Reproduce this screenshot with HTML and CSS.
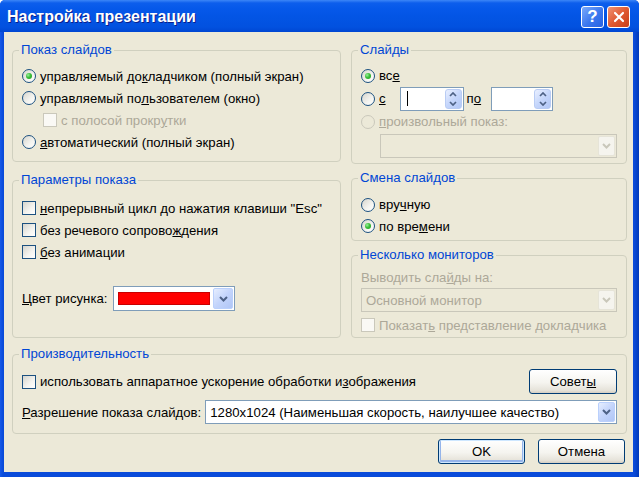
FILE: index.html
```html
<!DOCTYPE html>
<html lang="ru">
<head>
    <meta charset="UTF-8">
    <title>Настройка презентации</title>
    <link rel="stylesheet" href="styles.css">
</head>
<body>
    <div class="window">
        <div class="titlebar">
            <span class="title">Настройка презентации</span>
            <div class="caption-buttons">
                <span class="cap-btn help">?</span>
                <span class="cap-btn close">
                    <svg width="12" height="12" viewBox="0 0 12 12"><path d="M2 2l8 8M10 2l-8 8" stroke="#fff" stroke-width="2.2" stroke-linecap="round"/></svg>
                </span>
            </div>
        </div>

        <div class="client">
            <div class="columns">
                <div class="col col-left">
                    <!-- Показ слайдов -->
                    <fieldset class="group show-type">
                        <legend>Показ слайдов</legend>
                        <div class="row"><span class="radio checked"></span>управляемый до<u>к</u>ладчиком (полный экран)</div>
                        <div class="row"><span class="radio"></span>управляемый по<u>л</u>ьзователем (окно)</div>
                        <div class="row indent disabled"><span class="check"></span>с полосой прокр<u>у</u>тки</div>
                        <div class="row"><span class="radio"></span><u>а</u>втоматический (полный экран)</div>
                    </fieldset>

                    <!-- Параметры показа -->
                    <fieldset class="group show-options">
                        <legend>Параметры показа</legend>
                        <div class="row"><span class="check"></span><u>н</u>епрерывный цикл до нажатия клавиши "Esc"</div>
                        <div class="row"><span class="check"></span>без речевого сопрово<u>ж</u>дения</div>
                        <div class="row"><span class="check"></span><u>б</u>ез анимации</div>
                        <div class="row color-row">
                            <span><u>Ц</u>вет рисунка:</span>
                            <div class="combo color-combo">
                                <span class="swatch"></span>
                                <span class="drop"><svg width="9" height="6" viewBox="0 0 9 6"><path d="M1 1l3.5 3.5L8 1" fill="none" stroke="#4D6185" stroke-width="2"/></svg></span>
                            </div>
                        </div>
                    </fieldset>
                </div>

                <div class="col col-right">
                    <!-- Слайды -->
                    <fieldset class="group slides">
                        <legend>Слайды</legend>
                        <div class="row short"><span class="radio checked"></span>вс<u>е</u></div>
                        <div class="row tall">
                            <span class="radio"></span><u>с</u>
                            <div class="spin spin-from">
                                <span class="spin-value"><span class="caret"></span></span>
                                <span class="spin-btns">
                                    <svg width="8" height="5" viewBox="0 0 8 5"><path d="M1 4l3-3 3 3" fill="none" stroke="#4D6185" stroke-width="1.7"/></svg>
                                    <svg width="8" height="5" viewBox="0 0 8 5"><path d="M1 1l3 3 3-3" fill="none" stroke="#4D6185" stroke-width="1.7"/></svg>
                                </span>
                            </div>
                            <span class="to-label">п<u>о</u></span>
                            <div class="spin spin-to">
                                <span class="spin-value"></span>
                                <span class="spin-btns">
                                    <svg width="8" height="5" viewBox="0 0 8 5"><path d="M1 4l3-3 3 3" fill="none" stroke="#4D6185" stroke-width="1.7"/></svg>
                                    <svg width="8" height="5" viewBox="0 0 8 5"><path d="M1 1l3 3 3-3" fill="none" stroke="#4D6185" stroke-width="1.7"/></svg>
                                </span>
                            </div>
                        </div>
                        <div class="row short disabled"><span class="radio"></span><u>п</u>роизвольный показ:</div>
                        <div class="combo off custom-combo">
                            <span class="combo-value"></span>
                            <span class="drop"><svg width="9" height="6" viewBox="0 0 9 6"><path d="M1 1l3.5 3.5L8 1" fill="none" stroke="#C9C7BA" stroke-width="2"/></svg></span>
                        </div>
                    </fieldset>

                    <!-- Смена слайдов -->
                    <fieldset class="group advance">
                        <legend>Смена слайдов</legend>
                        <div class="row short"><span class="radio"></span>вру<u>ч</u>ную</div>
                        <div class="row"><span class="radio checked"></span>по вре<u>м</u>ени</div>
                    </fieldset>

                    <!-- Несколько мониторов -->
                    <fieldset class="group monitors">
                        <legend>Несколько мониторов</legend>
                        <div class="row label-row disabled">Выводить сла<u>й</u>ды на:</div>
                        <div class="combo off monitor-combo">
                            <span class="combo-value">Основной монитор</span>
                            <span class="drop"><svg width="9" height="6" viewBox="0 0 9 6"><path d="M1 1l3.5 3.5L8 1" fill="none" stroke="#C9C7BA" stroke-width="2"/></svg></span>
                        </div>
                        <div class="row presenter disabled"><span class="check"></span>Показат<u>ь</u>&nbsp;представление докладчика</div>
                    </fieldset>
                </div>
            </div>

            <!-- Производительность -->
            <fieldset class="group perf">
                <legend>Производительность</legend>
                <div class="row tall">
                    <span class="check"></span>использовать аппаратное ускорение обработки и<u>з</u>ображения
                    <span class="btn tips">Совет<u>ы</u></span>
                </div>
                <div class="row res-row">
                    <span><u>Р</u>азрешение показа слайдов:</span>
                    <div class="combo res-combo">
                        <span class="combo-value">1280x1024 (Наименьшая скорость, наилучшее качество)</span>
                        <span class="drop"><svg width="9" height="6" viewBox="0 0 9 6"><path d="M1 1l3.5 3.5L8 1" fill="none" stroke="#4D6185" stroke-width="2"/></svg></span>
                    </div>
                </div>
            </fieldset>

            <div class="buttons">
                <span class="btn default">OK</span>
                <span class="btn">Отмена</span>
            </div>
        </div>
    </div>
</body>
</html>
```

FILE: styles.css
```css
* {
    box-sizing: border-box;
}
body {
    margin: 0;
    font-family: "Liberation Sans", Arial, sans-serif;
    font-size: 13.2px;
    color: #000;
    background: #fff;
}
.window {
    width: 639px;
    height: 477px;
    display: flex;
    flex-direction: column;
    background: linear-gradient(to right, #1659E8 0, #0A4BDA 3px, #0A4BDA 634px, #0039B8 100%);
    border-radius: 5px 5px 0 0;
    overflow: hidden;
}
/* Title bar */
.titlebar {
    height: 32px;
    flex: none;
    display: flex;
    align-items: center;
    justify-content: space-between;
    padding: 2px 9px 0 7px;
    background: linear-gradient(to bottom, #3C86F7 0, #0D5EEC 3px, #0659EA 8px, #0355E5 50%, #0251DF 85%, #0046D2 100%);
}
.title {
    color: #fff;
    font-weight: bold;
    font-size: 16px;
    text-shadow: 1px 1px 0 #0A1E8C;
}
.caption-buttons {
    display: flex;
    gap: 3px;
}
.cap-btn {
    width: 23px;
    height: 22px;
    border: 1px solid #fff;
    border-radius: 3px;
    display: flex;
    align-items: center;
    justify-content: center;
}
.help {
    background: linear-gradient(135deg, #7BAAFB 0%, #3A76EE 55%, #2862E2 100%);
    color: #fff;
    font-weight: bold;
    font-size: 17px;
}
.close {
    background: linear-gradient(135deg, #F09374 0%, #E05A33 50%, #C83E17 100%);
}
/* Client area */
.client {
    flex: 1;
    margin: 0 6px 5px 4px;
    background: #ECE9D8;
    padding: 10px 6px 0 8px;
}
.columns {
    display: flex;
    gap: 10px;
}
.col {
    display: flex;
    flex-direction: column;
}
.col-left {
    width: 329px;
    gap: 10px;
}
.col-right {
    flex: 1;
    gap: 6px;
}
/* Group boxes */
.group {
    margin: 0;
    min-width: 0;
    border: 1px solid #D0D0BF;
    border-radius: 4px;
    padding: 0 9px;
}
.group legend {
    color: #0046D5;
    line-height: 16px;
    padding: 0 2px;
    margin-left: -3px;
}
.show-type {
    height: 120px;
    padding-top: 7px;
}
.show-options {
    height: 166px;
    padding-top: 9px;
}
.slides {
    height: 122px;
    padding-top: 7px;
}
.advance {
    height: 71px;
    padding-top: 8px;
}
.monitors {
    height: 91px;
    padding-top: 4px;
}
.perf {
    margin-top: 8px;
    height: 88px;
    padding-top: 7px;
}
/* Rows and controls */
.row {
    display: flex;
    align-items: center;
    height: 22px;
    white-space: nowrap;
}
.row.short {
    height: 21px;
}
.row.tall {
    height: 25px;
}
.row.indent {
    padding-left: 21px;
}
.disabled {
    color: #ACA899;
}
.radio {
    width: 14px;
    height: 14px;
    flex: none;
    margin-right: 4px;
    border: 1px solid #1C5180;
    border-radius: 50%;
    background: linear-gradient(135deg, #D6D5CD 0%, #F4F4F0 60%, #FFFFFF 100%);
    display: flex;
    align-items: center;
    justify-content: center;
}
.radio.checked::after {
    content: "";
    width: 6px;
    height: 6px;
    border-radius: 50%;
    background: radial-gradient(circle at 35% 35%, #9BEE9B 0%, #3ABF3A 45%, #1E9A1E 100%);
}
.check {
    width: 14px;
    height: 14px;
    flex: none;
    margin-right: 4px;
    border: 1px solid #1C5180;
    background: linear-gradient(135deg, #D6D5CD 0%, #F4F4F0 60%, #FFFFFF 100%);
}
.disabled .radio {
    border-color: #CAC8BB;
    background: transparent;
}
.disabled .check {
    border-color: #CAC8BB;
    background: #FAF9F5;
}
/* Spin boxes */
.spin {
    display: flex;
    width: 64px;
    height: 24px;
    border: 1px solid #7F9DB9;
    background: #fff;
    padding: 1px;
}
.spin-from {
    margin-left: 14px;
}
.spin-to {
    margin-left: 10px;
    width: 62px;
}
.to-label {
    margin-left: 3px;
}
.spin-value {
    flex: 1;
    display: flex;
    align-items: center;
    padding-left: 5px;
}
.caret {
    width: 1px;
    height: 15px;
    background: #000;
}
.spin-btns {
    width: 17px;
    display: flex;
    flex-direction: column;
    align-items: center;
    justify-content: center;
    gap: 4px;
    border: 1px solid #B9CCF4;
    border-radius: 3px;
    background: linear-gradient(135deg, #EAF0FF 0%, #C5D6FB 50%, #B2C7F6 100%);
}
/* Combo boxes */
.combo {
    display: flex;
    height: 24px;
    border: 1px solid #7F9DB9;
    background: #fff;
    padding: 1px;
}
.combo-value {
    flex: 1;
    display: flex;
    align-items: center;
    padding-left: 3px;
    white-space: nowrap;
    overflow: hidden;
}
.drop {
    width: 17px;
    flex: none;
    display: flex;
    align-items: center;
    justify-content: center;
    border: 1px solid #BAD0FC;
    border-radius: 2px;
    background: linear-gradient(135deg, #E6EEFF 0%, #C3D4FB 50%, #B0C6F6 100%);
}
.combo.off {
    border-color: #C9C7BA;
    background: transparent;
    color: #ACA899;
}
.combo.off .drop {
    border-color: #E6E4D8;
    background: #F5F4EE;
}
.custom-combo {
    margin-left: 19px;
    margin-top: 2px;
}
.label-row {
    height: 20px;
}
.monitor-combo {
    margin-top: 1px;
}
.presenter {
    margin-top: 2px;
}
.color-row {
    margin-top: 23px;
    height: 25px;
}
.color-combo {
    width: 122px;
    height: 25px;
    margin-left: 6px;
}
.color-combo .swatch {
    flex: 1;
    margin: 4px 3px;
    background: #FF0000;
    border: 1px solid #C80000;
}
.color-combo .drop {
    width: 20px;
}
.res-row {
    margin-top: 6px;
    height: 24px;
}
.res-combo {
    flex: 1;
    margin-left: 4px;
}
/* Push buttons */
.btn {
    display: flex;
    align-items: center;
    justify-content: center;
    width: 87px;
    height: 25px;
    border: 1px solid #003C74;
    border-radius: 3px;
    background: linear-gradient(to bottom, #FFFFFF 0%, #F5F4EF 55%, #E6E3DA 88%, #D4CEC2 100%);
}
.btn.default {
    box-shadow: inset 0 0 0 1px #CEE7FF, inset 0 -1px 0 2px #95B4EA;
}
.tips {
    margin-left: auto;
    width: 88px;
}
.buttons {
    display: flex;
    justify-content: flex-end;
    gap: 13px;
    margin-top: 5px;
    padding-right: 2px;
}
```
